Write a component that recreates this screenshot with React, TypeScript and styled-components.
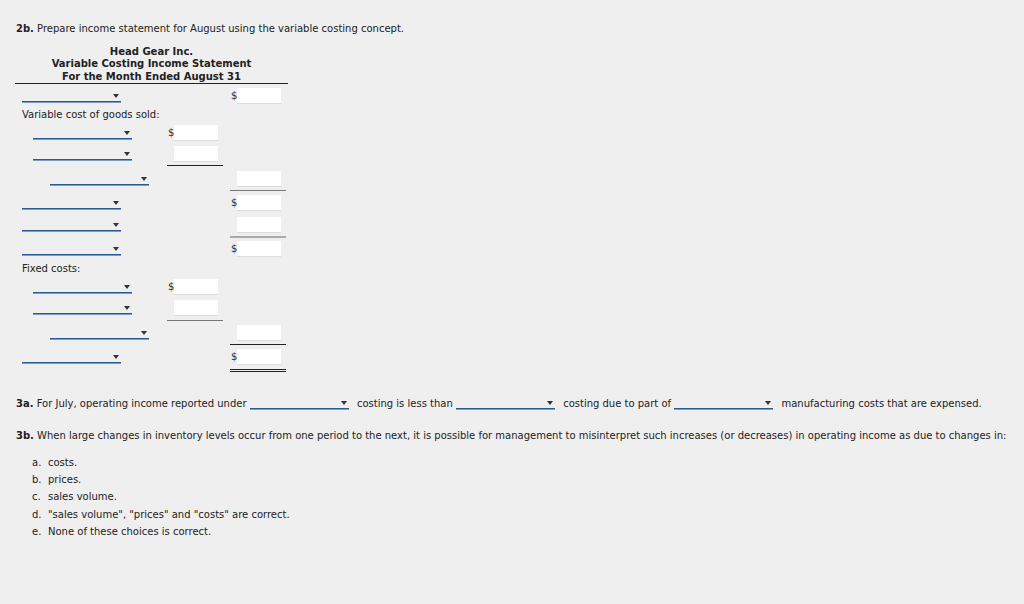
import React from "react";
import styled, { createGlobalStyle } from "styled-components";

const Global = createGlobalStyle`
  html, body { margin: 0; padding: 0; background: #efefef; }
  body { font-family: "DejaVu Sans", Verdana, sans-serif; font-size: 10px; color: #222; }
`;

const Page = styled.div`
  width: 1024px;
  height: 604px;
  background: #efefef;
  box-sizing: border-box;
  padding: 22px 0 0 16px;
  overflow: hidden;
`;

const Para = styled.div<{ $mt?: number }>`
  line-height: 14px;
  margin-top: ${(p) => p.$mt ?? 0}px;
  white-space: nowrap;
`;

const Tag = styled.b`
  font-weight: bold;
`;

const Statement = styled.div`
  width: 273px;
  margin-left: -1px;
  margin-top: 8.5px;
`;

const Title = styled.div`
  text-align: center;
  font-weight: bold;
  line-height: 12.25px;
  padding-top: 1.5px;
  border-bottom: 1.5px solid #222;
`;

const Row = styled.div<{ $h: number; $pt: number }>`
  display: grid;
  grid-template-columns: 152px 56px 63px;
  height: ${(p) => p.$h}px;
  box-sizing: border-box;
  & > * {
    padding-top: ${(p) => p.$pt}px;
  }
`;

const LabelRow = styled.div<{ $h: number }>`
  box-sizing: border-box;
  height: ${(p) => p.$h}px;
  line-height: ${(p) => p.$h}px;
  padding: 1.5px 0 0 7px;
`;

type Line = "none" | "black" | "gray" | "light" | "double";

const lineStyle = (l: Line) => {
  switch (l) {
    case "black":
      return "border-bottom: 1.5px solid #222;";
    case "gray":
      return "border-bottom: 1.5px solid #777;";
    case "light":
      return "border-bottom: 2px solid #aaa;";
    case "double":
      return "border-bottom: 3px double #222;";
    default:
      return "";
  }
};

const Cell = styled.div<{ $line: Line; $lead?: number }>`
  box-sizing: border-box;
  display: flex;
  justify-content: flex-end;
  align-items: flex-start;
  padding-right: 5px;
  margin-left: ${(p) => p.$lead ?? 0}px;
  ${(p) => lineStyle(p.$line)}
`;

const LabelCell = styled.div<{ $indent: number }>`
  box-sizing: border-box;
  padding-left: ${(p) => p.$indent}px;
`;

const Dollar = styled.span`
  width: 6px;
  line-height: 16px;
  font-size: 10px;
  color: #333;
`;

const Input = styled.div`
  width: 44px;
  height: 15px;
  background: #fff;
  box-shadow: 0 1px 0 #dcdcdc;
`;

const Select = styled.span<{ $w?: number }>`
  position: relative;
  display: inline-block;
  box-sizing: border-box;
  width: ${(p) => p.$w ?? 99}px;
  height: 14px;
  border-bottom: 1px solid #2a5b95;
  box-shadow: 0 1px 0 #7a9cc6;
  vertical-align: -2px;
  &::after {
    content: "";
    position: absolute;
    right: 2px;
    top: 6px;
    border-left: 3.5px solid transparent;
    border-right: 3.5px solid transparent;
    border-top: 4px solid #333;
  }
`;

const InlineSelect = styled(Select)`
  margin-right: 5px;
`;

const Choices = styled.ol`
  list-style: none;
  margin: 11px 0 0 0;
  padding: 0 0 0 16px;
`;

const Choice = styled.li`
  display: flex;
  line-height: 17.25px;
`;

const Letter = styled.span`
  width: 16px;
`;

type RowSpec = {
  h: number;
  pt: number;
  indent: number;
  col: 2 | 3;
  dollar?: boolean;
  line?: Line;
};

const block1: RowSpec[] = [
  { h: 21, pt: 3, indent: 18, col: 2, dollar: true },
  { h: 23, pt: 3, indent: 18, col: 2, line: "black" },
  { h: 25, pt: 5, indent: 35, col: 3, line: "gray" },
  { h: 23, pt: 4, indent: 7, col: 3, dollar: true },
  { h: 24, pt: 3, indent: 7, col: 3, line: "light" },
  { h: 22, pt: 3, indent: 7, col: 3, dollar: true },
];

const block2: RowSpec[] = [
  { h: 21, pt: 3, indent: 18, col: 2, dollar: true },
  { h: 24, pt: 3, indent: 18, col: 2, line: "gray" },
  { h: 24, pt: 4, indent: 35, col: 3, line: "black" },
  { h: 27, pt: 4, indent: 7, col: 3, dollar: true, line: "double" },
];

const StatementRow = ({ r }: { r: RowSpec }) => {
  const money = (
    <>
      {r.dollar && <Dollar>$</Dollar>}
      <Input />
    </>
  );
  return (
    <Row $h={r.h} $pt={r.pt}>
      <LabelCell $indent={r.indent}>
        <Select />
      </LabelCell>
      <Cell $line={r.col === 2 ? r.line ?? "none" : "none"}>{r.col === 2 && money}</Cell>
      <Cell $lead={7} $line={r.col === 3 ? r.line ?? "none" : "none"}>
        {r.col === 3 && money}
      </Cell>
    </Row>
  );
};

export default function App() {
  return (
    <>
      <Global />
      <Page>
        <Para>
          <Tag>2b.</Tag> Prepare income statement for August using the variable costing concept.
        </Para>
        <Statement>
          <Title>
            <div>Head Gear Inc.</div>
            <div>Variable Costing Income Statement</div>
            <div>For the Month Ended August 31</div>
          </Title>
          <StatementRow r={{ h: 22, pt: 4, indent: 7, col: 3, dollar: true }} />
          <LabelRow $h={16}>Variable cost of goods sold:</LabelRow>
          {block1.map((r, i) => (
            <StatementRow key={"a" + i} r={r} />
          ))}
          <LabelRow $h={16}>Fixed costs:</LabelRow>
          {block2.map((r, i) => (
            <StatementRow key={"b" + i} r={r} />
          ))}
        </Statement>
        <Para $mt={23}>
          <Tag>3a.</Tag> For July, operating income reported under <InlineSelect $w={99} /> costing is less than{" "}
          <InlineSelect $w={99} /> costing due to part of <InlineSelect $w={99} /> manufacturing costs that are expensed.
        </Para>
        <Para $mt={18}>
          <Tag>3b.</Tag> When large changes in inventory levels occur from one period to the next, it is possible for management to
          misinterpret such increases (or decreases) in operating income as due to changes in:
        </Para>
        <Choices>
          {[
            ["a.", "costs."],
            ["b.", "prices."],
            ["c.", "sales volume."],
            ["d.", "\"sales volume\", \"prices\" and \"costs\" are correct."],
            ["e.", "None of these choices is correct."],
          ].map(([l, t]) => (
            <Choice key={l}>
              <Letter>{l}</Letter>
              <span>{t}</span>
            </Choice>
          ))}
        </Choices>
      </Page>
    </>
  );
}
